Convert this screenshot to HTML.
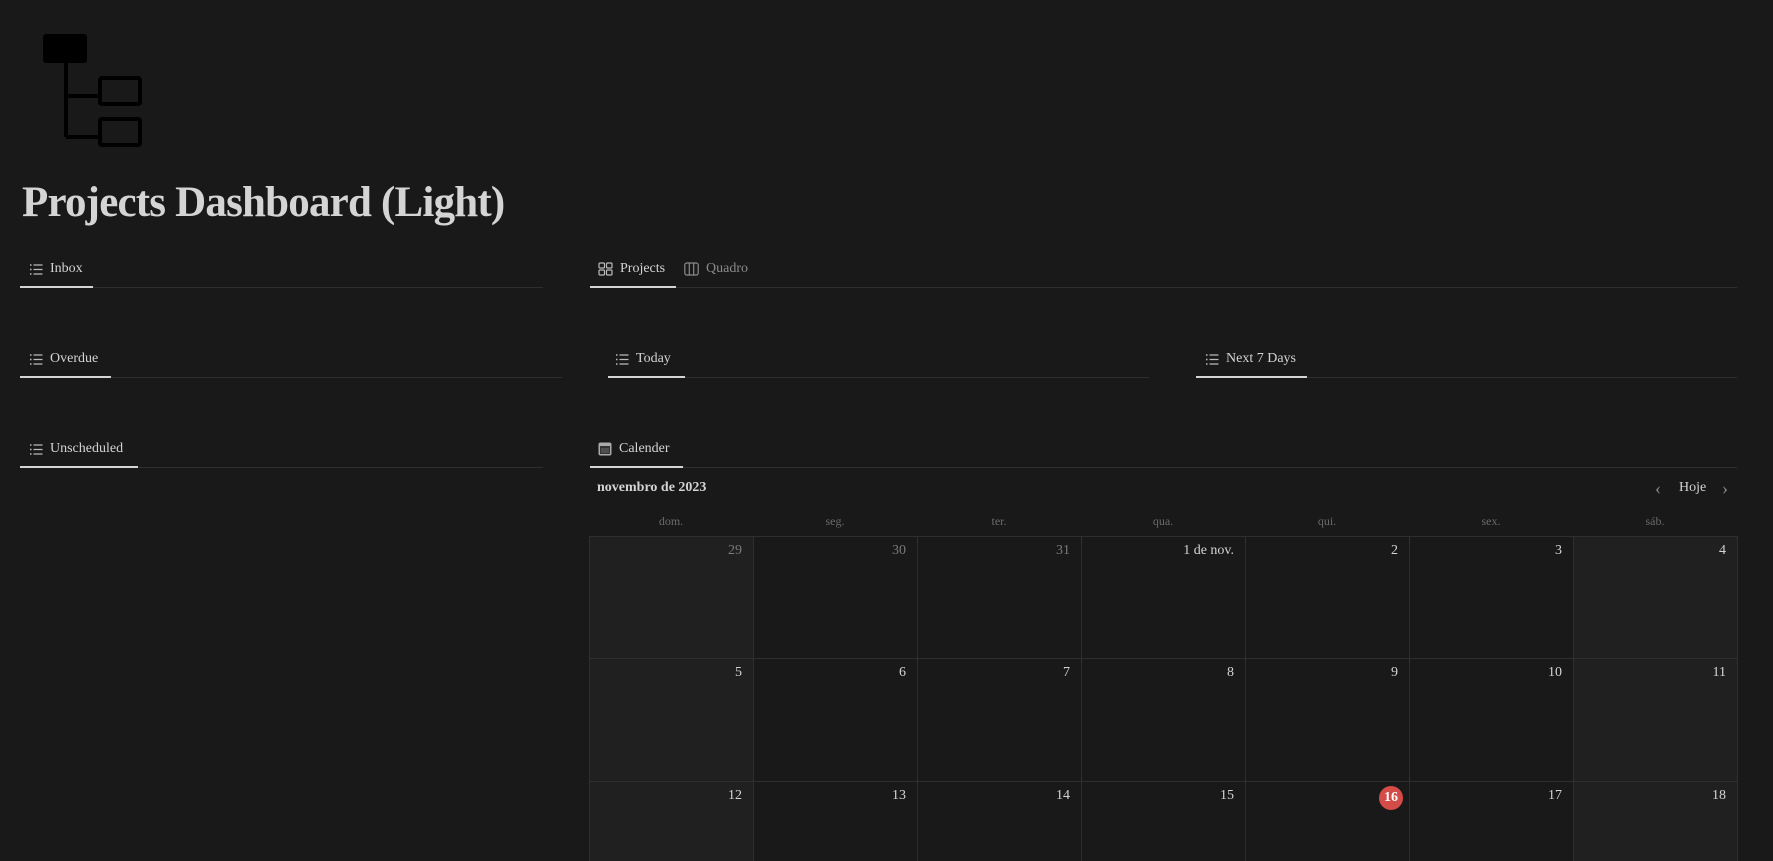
<!DOCTYPE html>
<html><head><meta charset="utf-8"><style>
*{margin:0;padding:0;box-sizing:border-box}
body{width:1773px;height:856px;background:#191919;overflow:hidden;position:relative;font-family:"Liberation Serif",serif;color:#d4d4d4}
.abs{position:absolute}
.line{position:absolute;height:1px;background:#2f2f2f}
.ul{position:absolute;height:2px;background:#d4d4d4}
.tab{position:absolute;font-size:14px;line-height:18px;display:flex;align-items:center;gap:7px;color:#d4d4d4}
.tab svg{flex:none}
.cell{position:absolute;border-left:1px solid #2f2f2f;border-top:1px solid #2f2f2f;font-size:14px;text-align:right;padding:6px 11px 0 0;color:#d4d4d4}
.wk{background:#202020}
.dim{color:#7a7a7a}
.hd{position:absolute;top:514px;font-size:12px;color:#6b6b6b;text-align:center;width:164px}
</style></head><body>
<svg class="abs" style="left:40px;top:32px" width="110" height="118" viewBox="40 32 110 118">
<rect x="43" y="34" width="44" height="29" rx="3" fill="#000"/>
<path d="M66 62 V137 M66 96 H100 M66 137 H100" stroke="#000" stroke-width="4" fill="none"/>
<rect x="100" y="78" width="40" height="26" rx="2" stroke="#000" stroke-width="4" fill="none"/>
<rect x="100" y="119" width="40" height="26" rx="2" stroke="#000" stroke-width="4" fill="none"/>
</svg>
<div class="abs" style="left:22px;top:175px;font-size:43px;font-weight:bold;line-height:56px;color:#d4d4d4;letter-spacing:-0.8px">Projects Dashboard (Light)</div>

<svg width="0" height="0" style="position:absolute"><defs>
<g id="li"><path d="M1 2h1.5M1 6.5h1.5M1 11h1.5" stroke="#bbb" stroke-width="1.6"/><path d="M4.5 2h9M4.5 6.5h9M4.5 11h9" stroke="#bbb" stroke-width="1.3"/></g>
</defs></svg>

<div class="tab" style="left:29px;top:260px"><svg width="14" height="13"><use href="#li"/></svg>Inbox</div>
<div class="line" style="left:20px;top:287px;width:523px"></div><div class="ul" style="left:20px;top:286px;width:73px"></div>

<div class="tab" style="left:598px;top:260px"><svg width="15" height="14" viewBox="0 0 15 14"><g fill="none" stroke="#bbb" stroke-width="1.2"><rect x="1" y="1" width="5.5" height="5" rx="1"/><rect x="8.5" y="1" width="5.5" height="5" rx="1"/><rect x="1" y="8" width="5.5" height="5" rx="1"/><rect x="8.5" y="8" width="5.5" height="5" rx="1"/></g></svg>Projects</div>
<div class="tab" style="left:684px;top:260px;color:#8a8a8a"><svg width="15" height="14" viewBox="0 0 15 14"><g fill="none" stroke="#8a8a8a" stroke-width="1.2"><rect x="0.8" y="1" width="13.4" height="12" rx="2"/><path d="M5.3 1v12M9.7 1v12"/></g></svg>Quadro</div>
<div class="line" style="left:590px;top:287px;width:1147px"></div><div class="ul" style="left:590px;top:286px;width:86px"></div>

<div class="tab" style="left:29px;top:350px"><svg width="14" height="13"><use href="#li"/></svg>Overdue</div>
<div class="line" style="left:20px;top:377px;width:542px"></div><div class="ul" style="left:20px;top:376px;width:91px"></div>

<div class="tab" style="left:615px;top:350px"><svg width="14" height="13"><use href="#li"/></svg>Today</div>
<div class="line" style="left:608px;top:377px;width:541px"></div><div class="ul" style="left:608px;top:376px;width:77px"></div>

<div class="tab" style="left:1205px;top:350px"><svg width="14" height="13"><use href="#li"/></svg>Next 7 Days</div>
<div class="line" style="left:1196px;top:377px;width:541px"></div><div class="ul" style="left:1196px;top:376px;width:111px"></div>

<div class="tab" style="left:29px;top:440px"><svg width="14" height="13"><use href="#li"/></svg>Unscheduled</div>
<div class="line" style="left:20px;top:467px;width:523px"></div><div class="ul" style="left:20px;top:466px;width:118px"></div>

<div class="tab" style="left:598px;top:440px"><svg width="14" height="14" viewBox="0 0 14 14"><rect x="0.5" y="0.5" width="13" height="13" rx="2" fill="#aaa"/><rect x="2" y="4" width="10" height="8" fill="#333"/><path d="M4 6v5M6 6v5M8 6v5M10 6v5" stroke="#777" stroke-width="0.8"/></svg>Calender</div>
<div class="line" style="left:590px;top:467px;width:1147px"></div><div class="ul" style="left:590px;top:466px;width:93px"></div>

<div class="abs" style="left:597px;top:480px;font-size:14px;font-weight:bold;color:#d4d4d4">novembro de 2023</div>
<div class="abs" style="left:1655px;top:478px;font-size:18px;color:#888">‹</div>
<div class="abs" style="left:1679px;top:480px;font-size:14px;color:#d4d4d4">Hoje</div>
<div class="abs" style="left:1722px;top:478px;font-size:18px;color:#888">›</div>

<div class="hd" style="left:589px">dom.</div><div class="hd" style="left:753px">seg.</div><div class="hd" style="left:917px">ter.</div><div class="hd" style="left:1081px">qua.</div><div class="hd" style="left:1245px">qui.</div><div class="hd" style="left:1409px">sex.</div><div class="hd" style="left:1573px">sáb.</div>

<div class="cell wk dim" style="left:589px;top:536px;width:164px;height:122px">29</div>
<div class="cell dim" style="left:753px;top:536px;width:164px;height:122px">30</div>
<div class="cell dim" style="left:917px;top:536px;width:164px;height:122px">31</div>
<div class="cell" style="left:1081px;top:536px;width:164px;height:122px">1 de nov.</div>
<div class="cell" style="left:1245px;top:536px;width:164px;height:122px">2</div>
<div class="cell" style="left:1409px;top:536px;width:164px;height:122px">3</div>
<div class="cell wk" style="left:1573px;top:536px;width:165px;height:122px;border-right:1px solid #2f2f2f">4</div>

<div class="cell wk" style="left:589px;top:658px;width:164px;height:123px">5</div>
<div class="cell" style="left:753px;top:658px;width:164px;height:123px">6</div>
<div class="cell" style="left:917px;top:658px;width:164px;height:123px">7</div>
<div class="cell" style="left:1081px;top:658px;width:164px;height:123px">8</div>
<div class="cell" style="left:1245px;top:658px;width:164px;height:123px">9</div>
<div class="cell" style="left:1409px;top:658px;width:164px;height:123px">10</div>
<div class="cell wk" style="left:1573px;top:658px;width:165px;height:123px;border-right:1px solid #2f2f2f">11</div>

<div class="cell wk" style="left:589px;top:781px;width:164px;height:80px">12</div>
<div class="cell" style="left:753px;top:781px;width:164px;height:80px">13</div>
<div class="cell" style="left:917px;top:781px;width:164px;height:80px">14</div>
<div class="cell" style="left:1081px;top:781px;width:164px;height:80px">15</div>
<div class="cell" style="left:1245px;top:781px;width:164px;height:80px;padding:4px 6px 0 0"><span style="display:inline-block;width:24px;height:24px;border-radius:50%;background:#d44c47;color:#fff;text-align:center;line-height:24px;font-weight:bold">16</span></div>
<div class="cell" style="left:1409px;top:781px;width:164px;height:80px">17</div>
<div class="cell wk" style="left:1573px;top:781px;width:165px;height:80px;border-right:1px solid #2f2f2f">18</div>
</body></html>
